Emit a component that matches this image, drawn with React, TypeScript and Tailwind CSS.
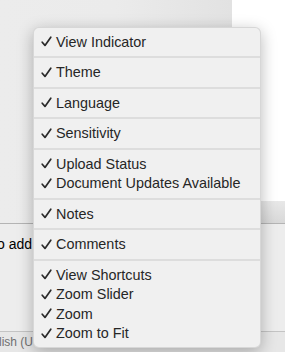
import React from 'react';

const groups: string[][] = [
  ['View Indicator'],
  ['Theme'],
  ['Language'],
  ['Sensitivity'],
  ['Upload Status', 'Document Updates Available'],
  ['Notes'],
  ['Comments'],
  ['View Shortcuts', 'Zoom Slider', 'Zoom', 'Zoom to Fit'],
];

const Check = () => (
  <svg width="11" height="11" viewBox="0 0 11 11" className="mr-[4px] shrink-0">
    <path d="M1.2 6.2 L4 9.4 L9.8 1.2" fill="none" stroke="#2a2a2a" strokeWidth="1.7" strokeLinecap="round" strokeLinejoin="round" />
  </svg>
);

const MenuItem = ({ label }: { label: string }) => (
  <div className="flex h-[19.5px] items-center pl-[7px] text-[14.4px] leading-none text-[#262626]">
    <Check />
    <span>{label}</span>
  </div>
);

const App = () => {
  return (
    <div className="relative h-[352px] w-[285px] overflow-hidden bg-white font-['Liberation_Sans',Arial,sans-serif]">
      {/* window behind */}
      <div className="flex h-full flex-col">
        <div className="flex h-[223px]">
          <div className="w-[232px] bg-gradient-to-r from-[#ececec] via-[#ebebeb] to-[#e2e2e2]" />
          <div className="flex flex-1 flex-col">
            <div className="flex-1 bg-white" />
            <div className="h-[22px] bg-gradient-to-b from-[#e8e8e8] to-[#d8d8d8]" />
          </div>
        </div>
        <div className="h-px bg-[#b4b4b4]" />
        <div className="flex-1 bg-[#ededed] pt-[11px]">
          <div className="flex w-[32px] justify-end overflow-hidden whitespace-nowrap text-[14px] leading-[18px] text-black">
            Click to add
          </div>
        </div>
        <div className="h-px bg-[#c4c4c4]" />
        <div className="flex h-[20px] items-center bg-[#e7e7e7]">
          <div className="flex w-[33px] justify-end overflow-hidden whitespace-nowrap text-[12px] text-[#707070]">
            English (U
          </div>
        </div>
      </div>

      {/* context menu */}
      <div className="absolute left-[33px] top-[27px] w-[228px] rounded-[6px] border border-black/10 bg-[#f0f0f0] py-[4px] shadow-[0_4px_16px_rgba(0,0,0,0.28)]">
        {groups.map((g, i) => (
          <div key={i}>
            {i > 0 && (
              <div className="flex h-[11px] items-center">
                <div className="h-[2px] w-full bg-[#dddddd]" />
              </div>
            )}
            {g.map((label) => (
              <MenuItem key={label} label={label} />
            ))}
          </div>
        ))}
      </div>
    </div>
  );
};

export default App;
